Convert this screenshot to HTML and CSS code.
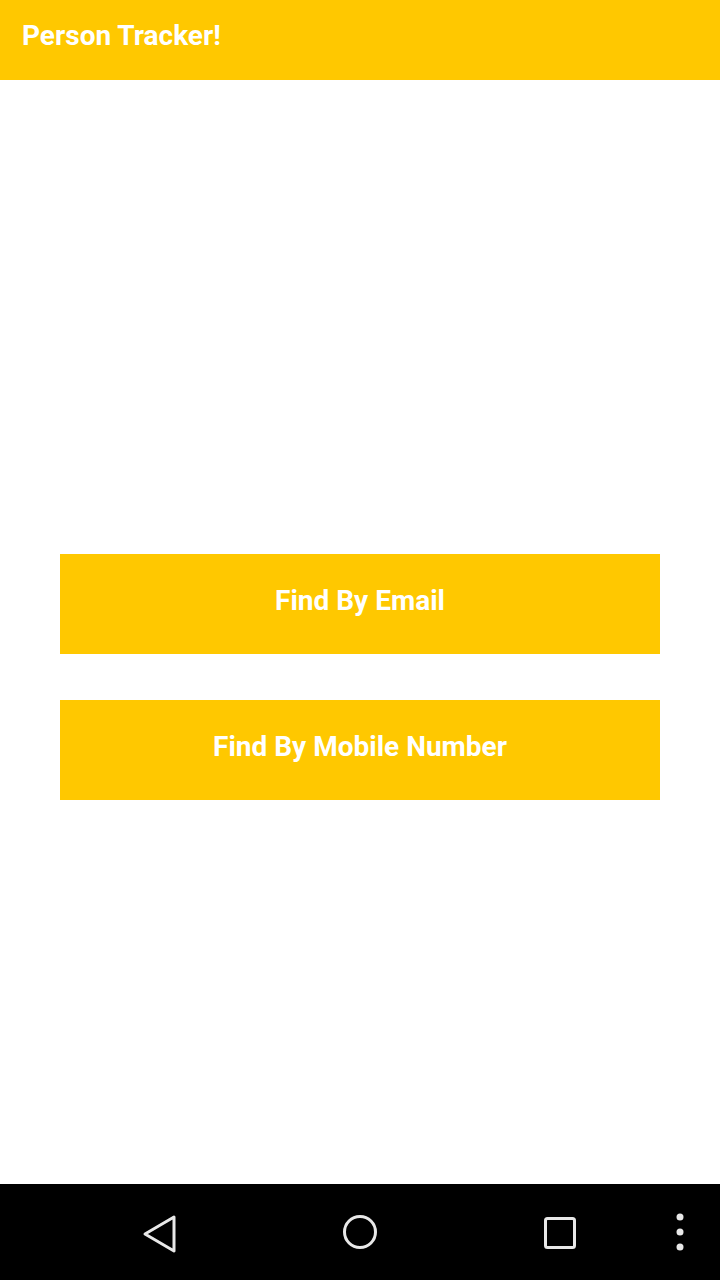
FILE: index.html
```html
<!DOCTYPE html>
<html>
<head>
<meta charset="utf-8">
<link rel="stylesheet" href="styles.css">
</head>
<body>
<div class="app">
  <header class="toolbar"><h1 class="title">Person Tracker!</h1></header>
  <main class="content">
    <button class="btn">Find By Email</button>
    <button class="btn">Find By Mobile Number</button>
  </main>
  <nav class="navbar">
    <svg class="nav-icon back" width="40" height="40" viewBox="0 0 40 40"><path d="M35 3 L6 20 L35 37 Z" fill="none" stroke="#e8e8e8" stroke-width="3" stroke-linejoin="round"/></svg>
    <svg class="nav-icon home" width="40" height="40" viewBox="0 0 40 40"><circle cx="20" cy="20" r="15.5" fill="none" stroke="#e8e8e8" stroke-width="3"/></svg>
    <svg class="nav-icon recent" width="40" height="40" viewBox="0 0 40 40"><rect x="5.5" y="5.5" width="29" height="29" rx="2" fill="none" stroke="#e8e8e8" stroke-width="3"/></svg>
    <svg class="nav-icon menu" width="12" height="40" viewBox="0 0 12 40"><circle cx="6" cy="5" r="3.5" fill="#e8e8e8"/><circle cx="6" cy="20" r="3.5" fill="#e8e8e8"/><circle cx="6" cy="35" r="3.5" fill="#e8e8e8"/></svg>
  </nav>
</div>
</body>
</html>
```
FILE: styles.css
```css
* { box-sizing: border-box; }
html, body { margin: 0; padding: 0; }
body { width: 720px; height: 1280px; font-family: Roboto, "Liberation Sans", sans-serif; background: #fff; }
.app { display: flex; flex-direction: column; height: 1280px; }
.toolbar { height: 80px; background: #ffc800; display: flex; align-items: center; padding-left: 22px; flex-shrink: 0; }
.title { margin: 0; color: #fff; font-size: 28px; font-weight: 700; line-height: 1; padding-bottom: 8px; }
.content { flex: 1; display: flex; flex-direction: column; align-items: center; padding-top: 474px; gap: 46px; }
.btn { width: 600px; height: 100px; background: #ffc800; border: none; color: #fff; font-family: Roboto, "Liberation Sans", sans-serif; font-size: 28px; font-weight: 700; padding: 0 0 8px 0; }
.navbar { height: 96px; background: #000; flex-shrink: 0; position: relative; }
.nav-icon { position: absolute; top: 28px; }
.back { left: 139px; top: 30px; }
.home { left: 340px; }
.recent { left: 540px; top: 29px; }
.menu { left: 674px; top: 28px; }
```
